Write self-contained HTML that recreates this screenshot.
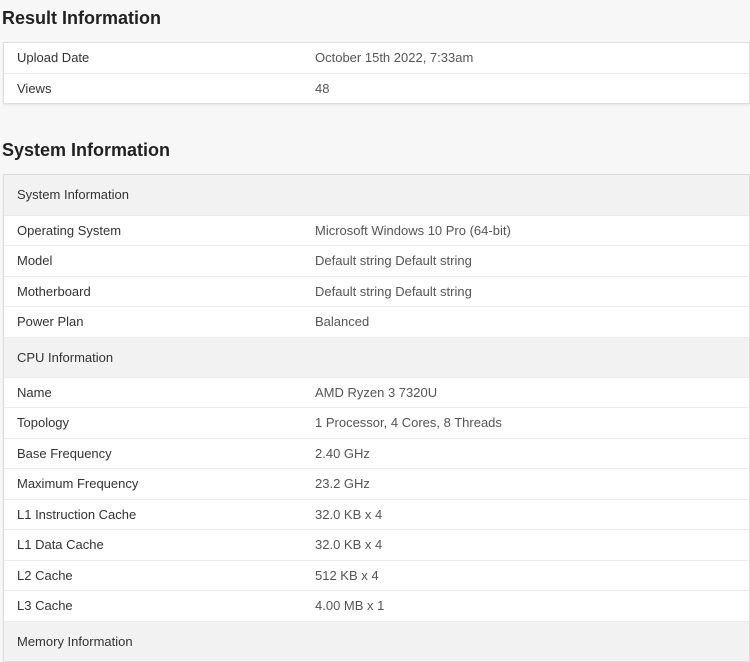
<!DOCTYPE html>
<html><head><style>
body{margin:0;background:#f7f7f7;font-family:"Liberation Sans",Arial,sans-serif;width:750px;height:662px;overflow:hidden;color:#333}
h2{margin:0;position:absolute;left:2px;font-size:18px;font-weight:bold;color:#222}
.t{position:absolute;left:3px;width:745px;border:1px solid #ddd;background:#fff;box-shadow:0 1px 2px rgba(0,0,0,.08)}
.r{height:29.5px;border-top:1px solid #ececec;position:relative;font-size:13px;line-height:29.5px}
.r:first-child{border-top:0}
.r span{position:absolute;left:13px}
.r b{position:absolute;left:311px;font-weight:normal;color:#555}
.h{height:39px;line-height:39px;background:#f2f2f2}
.h:first-child{height:39.5px}
</style></head><body>
<h2 style="top:8px">Result Information</h2>
<div class="t" style="top:42px">
<div class="r"><span>Upload Date</span><b>October 15th 2022, 7:33am</b></div>
<div class="r"><span>Views</span><b>48</b></div>
</div>
<h2 style="top:140px">System Information</h2>
<div class="t" style="top:174px">
<div class="r h"><span>System Information</span></div>
<div class="r"><span>Operating System</span><b>Microsoft Windows 10 Pro (64-bit)</b></div>
<div class="r"><span>Model</span><b>Default string Default string</b></div>
<div class="r"><span>Motherboard</span><b>Default string Default string</b></div>
<div class="r"><span>Power Plan</span><b>Balanced</b></div>
<div class="r h"><span>CPU Information</span></div>
<div class="r"><span>Name</span><b>AMD Ryzen 3 7320U</b></div>
<div class="r"><span>Topology</span><b>1 Processor, 4 Cores, 8 Threads</b></div>
<div class="r"><span>Base Frequency</span><b>2.40 GHz</b></div>
<div class="r"><span>Maximum Frequency</span><b>23.2 GHz</b></div>
<div class="r"><span>L1 Instruction Cache</span><b>32.0 KB x 4</b></div>
<div class="r"><span>L1 Data Cache</span><b>32.0 KB x 4</b></div>
<div class="r"><span>L2 Cache</span><b>512 KB x 4</b></div>
<div class="r"><span>L3 Cache</span><b>4.00 MB x 1</b></div>
<div class="r h"><span>Memory Information</span></div>
</div>
</body></html>
